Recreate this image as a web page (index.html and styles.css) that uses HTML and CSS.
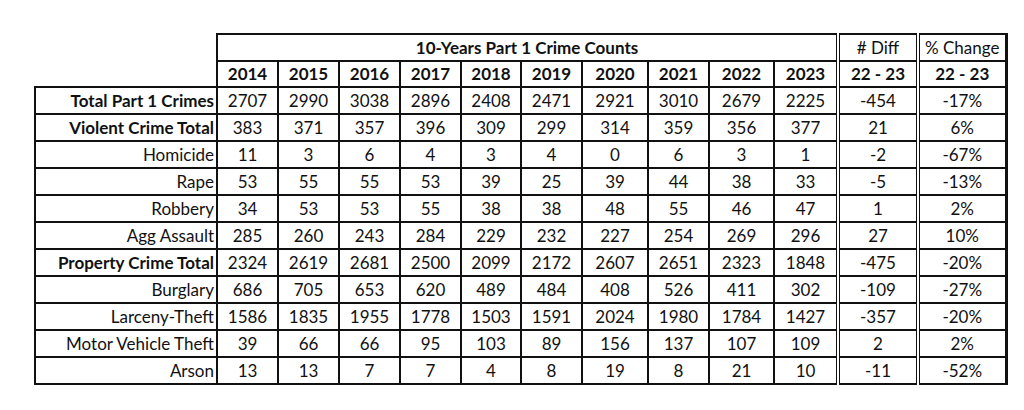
FILE: index.html
```html
<!DOCTYPE html>
<html lang="en">
<head>
<meta charset="utf-8">
<title>10-Years Part 1 Crime Counts</title>
<link rel="stylesheet" href="styles.css">
</head>
<body>
<table class="crime">
  <colgroup>
    <col class="c-label">
    <col class="c61"><col class="c61"><col class="c61"><col class="c61"><col class="c60">
    <col class="c61"><col class="c66"><col class="c61"><col class="c65"><col class="c64">
    <col class="c-diff"><col class="c-pct">
  </colgroup>
  <thead>
    <tr class="r1">
      <th class="blank"></th>
      <th colspan="10" class="title">10-Years Part 1 Crime Counts</th>
      <th class="dbl plain">#&nbsp;Diff</th>
      <th class="dbl plain last">% Change</th>
    </tr>
    <tr class="r2">
      <th class="blank"></th>
      <th>2014</th><th>2015</th><th>2016</th><th>2017</th><th>2018</th>
      <th>2019</th><th>2020</th><th>2021</th><th>2022</th><th>2023</th>
      <th class="dbl">22 - 23</th>
      <th class="dbl last">22 - 23</th>
    </tr>
  </thead>
  <tbody>
    <tr class="bold"><th>Total Part 1 Crimes</th><td>2707</td><td>2990</td><td>3038</td><td>2896</td><td>2408</td><td>2471</td><td>2921</td><td>3010</td><td>2679</td><td>2225</td><td class="dbl">-454</td><td class="dbl last">-17%</td></tr>
    <tr class="bold"><th>Violent Crime Total</th><td>383</td><td>371</td><td>357</td><td>396</td><td>309</td><td>299</td><td>314</td><td>359</td><td>356</td><td>377</td><td class="dbl">21</td><td class="dbl last">6%</td></tr>
    <tr><th>Homicide</th><td>11</td><td>3</td><td>6</td><td>4</td><td>3</td><td>4</td><td>0</td><td>6</td><td>3</td><td>1</td><td class="dbl">-2</td><td class="dbl last">-67%</td></tr>
    <tr><th>Rape</th><td>53</td><td>55</td><td>55</td><td>53</td><td>39</td><td>25</td><td>39</td><td>44</td><td>38</td><td>33</td><td class="dbl">-5</td><td class="dbl last">-13%</td></tr>
    <tr><th>Robbery</th><td>34</td><td>53</td><td>53</td><td>55</td><td>38</td><td>38</td><td>48</td><td>55</td><td>46</td><td>47</td><td class="dbl">1</td><td class="dbl last">2%</td></tr>
    <tr><th>Agg Assault</th><td>285</td><td>260</td><td>243</td><td>284</td><td>229</td><td>232</td><td>227</td><td>254</td><td>269</td><td>296</td><td class="dbl">27</td><td class="dbl last">10%</td></tr>
    <tr class="bold"><th>Property Crime Total</th><td>2324</td><td>2619</td><td>2681</td><td>2500</td><td>2099</td><td>2172</td><td>2607</td><td>2651</td><td>2323</td><td>1848</td><td class="dbl">-475</td><td class="dbl last">-20%</td></tr>
    <tr><th>Burglary</th><td>686</td><td>705</td><td>653</td><td>620</td><td>489</td><td>484</td><td>408</td><td>526</td><td>411</td><td>302</td><td class="dbl">-109</td><td class="dbl last">-27%</td></tr>
    <tr><th>Larceny-Theft</th><td>1586</td><td>1835</td><td>1955</td><td>1778</td><td>1503</td><td>1591</td><td>2024</td><td>1980</td><td>1784</td><td>1427</td><td class="dbl">-357</td><td class="dbl last">-20%</td></tr>
    <tr><th>Motor Vehicle Theft</th><td>39</td><td>66</td><td>66</td><td>95</td><td>103</td><td>89</td><td>156</td><td>137</td><td>107</td><td>109</td><td class="dbl">2</td><td class="dbl last">2%</td></tr>
    <tr><th>Arson</th><td>13</td><td>13</td><td>7</td><td>7</td><td>4</td><td>8</td><td>19</td><td>8</td><td>21</td><td>10</td><td class="dbl">-11</td><td class="dbl last">-52%</td></tr>
  </tbody>
</table>
</body>
</html>
```
FILE: styles.css
```css
html, body {
  margin: 0;
  padding: 0;
  background: #ffffff;
}
body {
  padding: 33px 0 0 34px;
  font-family: "Lato", "Open Sans", sans-serif;
  color: #111111;
}
.crime {
  border-collapse: collapse;
  table-layout: fixed;
  width: 972px;
  font-size: 17px;
}
.c-label { width: 182px; }
.c60 { width: 60px; }
.c61 { width: 61px; }
.c64 { width: 64px; }
.c65 { width: 65px; }
.c66 { width: 66px; }
.c-diff { width: 80px; }
.c-pct { width: 88px; }

.crime th, .crime td {
  border: 2px solid #111111;
  padding: 0 3px;
  text-align: center;
  white-space: nowrap;
  line-height: 20px;
}
.crime thead .r1 th { height: 25px; }
.crime thead .r2 th { height: 24px; }
.crime tbody th, .crime tbody td { height: 25px; }

.crime thead th { font-weight: 700; }
.crime thead th.plain { font-weight: 400; }
.crime thead th.blank { border: none; }

.crime tbody th {
  text-align: right;
  font-weight: 400;
  padding-right: 2px;
}
.crime tbody tr.bold th { font-weight: 700; }
.crime td { font-weight: 400; }

.crime .dbl { border-left: 4px double #111111; }
.crime .last { border-right: 3px solid #111111; }
```
